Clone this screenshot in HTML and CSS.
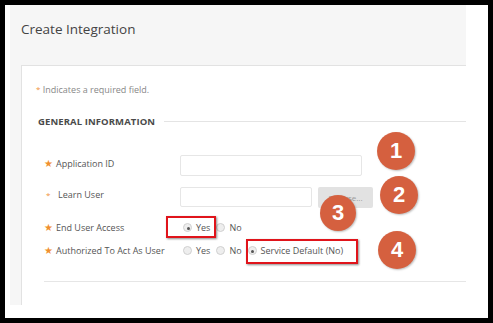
FILE: index.html
```html
<!DOCTYPE html>
<html>
<head>
<meta charset="utf-8">
<link rel="stylesheet" href="styles.css">
</head>
<body>
<div class="frame">
  <div class="page">
    <h1 class="title">Create Integration</h1>
    <div class="card">
      <p class="note"><span class="ast">*</span> Indicates a required field.</p>
      <div class="section-head">
        <span class="section-title">GENERAL INFORMATION</span>
        <span class="section-rule"></span>
      </div>
      <div class="form">
        <div class="label row-app"><span class="star">★</span>Application ID</div>
        <div class="control row-app"><span class="input wide"></span></div>

        <div class="label row-learn"><span class="ast-small">*</span>Learn User</div>
        <div class="control row-learn"><span class="input narrow"></span><span class="button">Browse...</span></div>

        <div class="label row-end"><span class="star">★</span>End User Access</div>
        <div class="control row-end radios">
          <span class="radio on"></span><span class="rtext">Yes</span>
          <span class="radio"></span><span class="rtext">No</span>
        </div>

        <div class="label row-auth"><span class="star">★</span>Authorized To Act As User</div>
        <div class="control row-auth radios">
          <span class="radio"></span><span class="rtext">Yes</span>
          <span class="radio"></span><span class="rtext">No</span>
          <span class="radio on"></span><span class="rtext">Service Default (No)</span>
        </div>
      </div>
      <div class="bottom-rule"></div>
    </div>
  </div>

  <span class="redbox box3"></span>
  <span class="redbox box4"></span>
  <span class="badge b1">1</span>
  <span class="badge b2">2</span>
  <span class="badge b3">3</span>
  <span class="badge b4">4</span>
</div>
</body>
</html>
```
FILE: styles.css
```css
html, body {
  margin: 0;
  padding: 0;
  background: #000;
}
body {
  width: 493px;
  height: 323px;
  overflow: hidden;
  font-family: "Open Sans", "Noto Sans", sans-serif;
}
.frame {
  position: relative;
  margin: 5px;
  width: 483px;
  height: 313px;
  background: #fff;
  overflow: hidden;
}
.page {
  margin-left: 5px;
  width: 456px;
  height: 300px;
  background: #f6f6f6;
  padding-left: 11px;
  box-sizing: border-box;
  overflow: hidden;
}
.title {
  margin: 0;
  padding-top: 15px;
  height: 45px;
  font-size: 13.5px;
  font-weight: 400;
  color: #444;
  line-height: 18px;
}
.card {
  background: #fff;
  border-left: 1px solid #e2e2e2;
  border-top: 1px solid #e2e2e2;
  height: 260px;
  padding-left: 14px;
  box-sizing: border-box;
}
.note {
  margin: 0;
  padding-top: 16px;
  font-size: 9px;
  line-height: 13px;
  color: #888;
}
.ast {
  color: #f0903a;
  font-size: 8px;
  vertical-align: 1px;
}
.section-head {
  display: flex;
  align-items: center;
  margin-top: 19px;
  padding-left: 2px;
}
.section-title {
  font-size: 9.5px;
  font-weight: 700;
  color: #4a4a4a;
  line-height: 13px;
  letter-spacing: 0.1px;
}
.section-rule {
  flex: 1;
  height: 1px;
  background: #e4e4e4;
  margin-left: 9px;
}
.form {
  display: grid;
  grid-template-columns: 136px 1fr;
  grid-template-rows: 31px 34px 23px 23px;
  margin-top: 28px;
  padding-left: 8px;
  font-size: 9px;
  color: #555;
}
.label {
  display: flex;
  align-items: flex-start;
  line-height: 13px;
}
.row-app.label { padding-top: 1px; }
.row-learn.label { padding-top: 1px; }
.star {
  color: #f0902e;
  font-size: 10px;
  width: 12px;
  line-height: 13px;
}
.ast-small {
  color: #f0903a;
  width: 14px;
  font-size: 8px;
  padding-left: 2px;
  box-sizing: border-box;
}
.control {
  display: flex;
  align-items: flex-start;
}
.row-app.control { margin-top: -1px; }
.row-learn.control { margin-top: 0; }
.input {
  display: block;
  height: 20px;
  border: 1px solid #e6e6e6;
  border-radius: 2px;
  box-sizing: border-box;
  background: #fff;
}
.input.wide { width: 182px; height: 21px; }
.input.narrow { width: 132px; }
.button {
  display: block;
  margin-left: 6px;
  width: 55px;
  height: 21px;
  background: #e2e2e2;
  border-radius: 2px;
  color: #9a9a9a;
  font-size: 8px;
  line-height: 21px;
  text-align: center;
}
.radios {
  align-items: center;
  height: 13px;
  margin-left: 3px;
}
.radio {
  display: inline-block;
  width: 9px;
  height: 9px;
  border-radius: 50%;
  border: 1px solid #d0d0d0;
  background: #eee;
  box-sizing: border-box;
  position: relative;
}
.radio.on::after {
  content: "";
  position: absolute;
  left: 2.5px;
  top: 2.5px;
  width: 3px;
  height: 3px;
  border-radius: 50%;
  background: #555;
}
.rtext {
  margin-left: 4px;
  margin-right: 6px;
  line-height: 13px;
}
.bottom-rule {
  margin-top: 14px;
  margin-left: 8px;
  height: 1px;
  background: #e6e6e6;
}
.redbox {
  position: absolute;
  border: 2px solid #e0141b;
  box-shadow: 1px 1px 2px rgba(0,0,0,0.45);
  box-sizing: border-box;
}
.box3 { left: 161px; top: 211px; width: 50px; height: 22px; }
.box4 { left: 241px; top: 234px; width: 112px; height: 25px; }
.badge {
  position: absolute;
  width: 38px;
  height: 38px;
  border-radius: 50%;
  background: #d5603f;
  color: #fff;
  font-family: "Liberation Sans", Arial, sans-serif;
  font-weight: 700;
  font-size: 22px;
  line-height: 38px;
  text-align: center;
  box-shadow: 1px 1px 2px rgba(0,0,0,0.25);
}
.b1 { left: 372px; top: 127px; }
.b2 { left: 375px; top: 171px; }
.b3 { left: 315px; top: 190px; width: 36px; height: 36px; line-height: 36px; }
.b4 { left: 373px; top: 226px; }
```
